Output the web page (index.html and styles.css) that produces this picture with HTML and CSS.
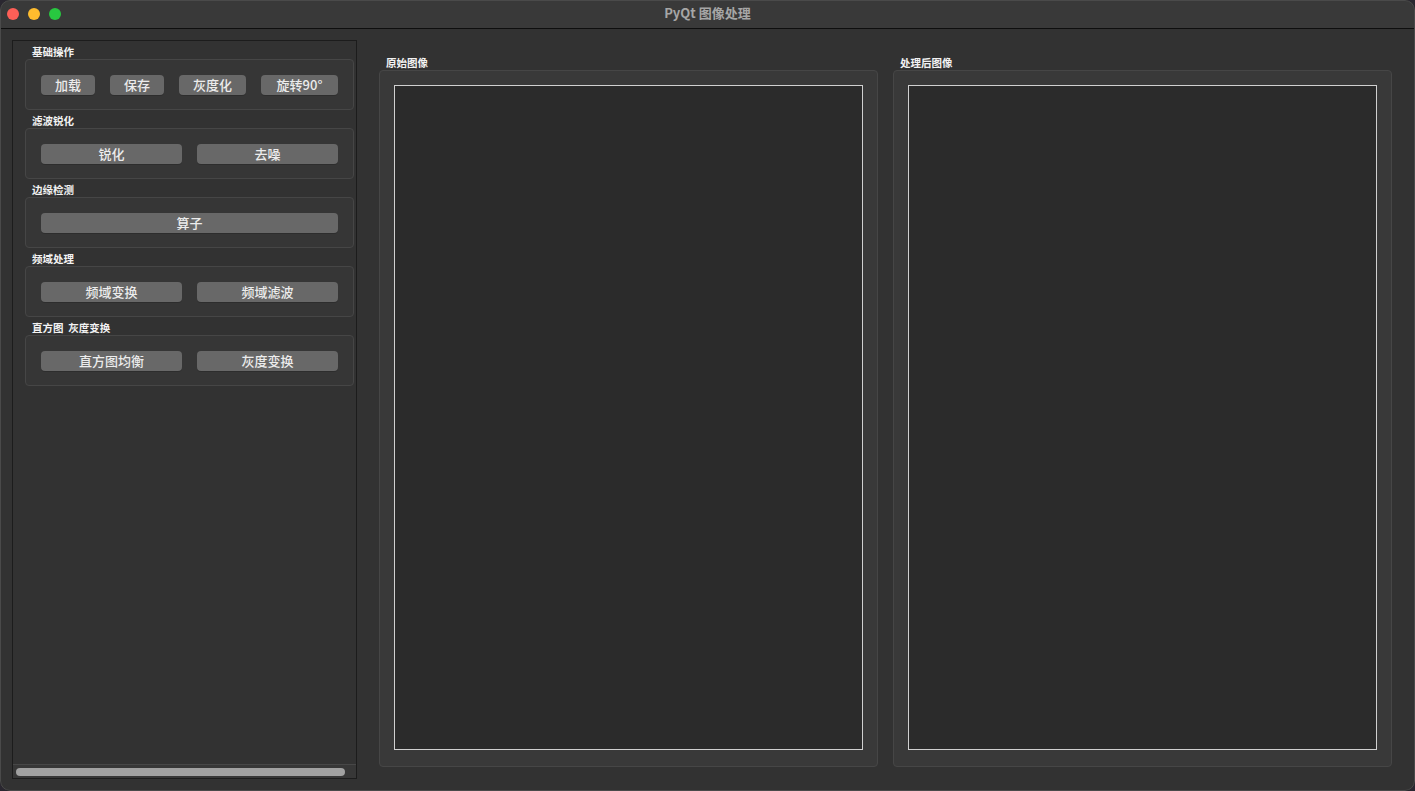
FILE: index.html
```html
<!DOCTYPE html>
<html lang="zh">
<head>
<meta charset="utf-8">
<title>PyQt 图像处理</title>
<link rel="stylesheet" href="styles.css">
</head>
<body>
<div class="window">
  <div class="titlebar">
    <div class="lights">
      <span class="light red"></span>
      <span class="light yellow"></span>
      <span class="light green"></span>
    </div>
    <div class="title">PyQt 图像处理</div>
  </div>
  <div class="main">
    <div class="sidebar">
      <div class="sidebar-content">
        <div class="group">
          <div class="group-label">基础操作</div>
          <div class="group-box row-4">
            <button class="btn">加载</button>
            <button class="btn">保存</button>
            <button class="btn">灰度化</button>
            <button class="btn">旋转90°</button>
          </div>
        </div>
        <div class="group">
          <div class="group-label">滤波锐化</div>
          <div class="group-box row-2">
            <button class="btn">锐化</button>
            <button class="btn">去噪</button>
          </div>
        </div>
        <div class="group">
          <div class="group-label">边缘检测</div>
          <div class="group-box row-1">
            <button class="btn">算子</button>
          </div>
        </div>
        <div class="group">
          <div class="group-label">频域处理</div>
          <div class="group-box row-2">
            <button class="btn">频域变换</button>
            <button class="btn">频域滤波</button>
          </div>
        </div>
        <div class="group">
          <div class="group-label">直方图&nbsp;&nbsp;灰度变换</div>
          <div class="group-box row-2">
            <button class="btn">直方图均衡</button>
            <button class="btn">灰度变换</button>
          </div>
        </div>
      </div>
      <div class="hscroll">
        <div class="hscroll-thumb"></div>
      </div>
    </div>
    <div class="views">
      <div class="view">
        <div class="view-label">原始图像</div>
        <div class="view-box">
          <div class="image-frame"></div>
        </div>
      </div>
      <div class="view">
        <div class="view-label">处理后图像</div>
        <div class="view-box">
          <div class="image-frame"></div>
        </div>
      </div>
    </div>
  </div>
</div>
</body>
</html>
```
FILE: styles.css
```css
* { box-sizing: border-box; }

html, body {
  margin: 0;
  padding: 0;
  background: #2a2730;
  width: 1415px;
  height: 791px;
  overflow: hidden;
  font-family: "Noto Sans CJK SC", "Noto Sans", sans-serif;
}

.window {
  position: relative;
  width: 1415px;
  height: 791px;
  background: #323232;
  border-radius: 10px;
  overflow: hidden;
  display: flex;
  flex-direction: column;
}

.window::after {
  content: "";
  position: absolute;
  inset: 0;
  border: 1px solid #4a4a4a;
  border-radius: 10px;
  pointer-events: none;
}

.titlebar {
  height: 29px;
  flex: none;
  background: #393939;
  border-bottom: 1px solid #0e0e0e;
  display: flex;
  align-items: center;
  justify-content: center;
  position: relative;
}

.lights {
  position: absolute;
  left: 7px;
  top: 8px;
  display: flex;
  gap: 9px;
}

.light {
  width: 12px;
  height: 12px;
  border-radius: 50%;
  display: block;
}
.red { background: #fe5f57; }
.yellow { background: #febc2e; }
.green { background: #28c840; }

.title {
  color: #a6a6a6;
  font-size: 13px;
  font-weight: 700;
  line-height: 28px;
  margin-top: -2px;
}

.main {
  flex: 1;
  display: flex;
  padding: 11px 23px 12px 12px;
  min-height: 0;
}

.sidebar {
  width: 345px;
  flex: none;
  border: 1px solid #1c1c1c;
  background: #323232;
  display: flex;
  flex-direction: column;
}

.sidebar-content {
  flex: 1;
  padding: 4px 2px 0 12px;
}

.group { margin-bottom: 4px; width: 329px; }

.group-label {
  height: 14px;
  line-height: 14px;
  font-size: 10.5px;
  font-weight: 700;
  color: #f2f2f2;
  padding-left: 7px;
}

.group-box {
  height: 51px;
  background: #363636;
  border: 1px solid #464646;
  border-radius: 4px;
  padding: 14px 15px 0 15px;
  display: grid;
  gap: 15px;
  align-content: start;
}

.row-4 { grid-template-columns: 54px 54px 67px 77px; }
.row-2 { grid-template-columns: 1fr 1fr; }
.row-1 { grid-template-columns: 1fr; }

.btn {
  height: 20px;
  margin-top: 1px;
  border: none;
  border-radius: 4px;
  background: #686868;
  color: #ececec;
  font-family: "Noto Sans CJK SC", "Noto Sans", sans-serif;
  font-size: 13px;
  font-weight: 500;
  line-height: 20px;
  padding: 0;
  box-shadow: 0 1px 0 rgba(0,0,0,0.15);
}

.hscroll {
  height: 14px;
  flex: none;
  background: #373737;
  border-top: 1px solid #474747;
  padding: 3px 11px 0 3px;
}

.hscroll-thumb {
  height: 8px;
  border-radius: 4px;
  background: #a1a1a1;
}

.views {
  flex: 1;
  display: flex;
  gap: 15px;
  margin-left: 22px;
  padding-top: 16px;
  padding-bottom: 12px;
}

.view {
  flex: 1;
  display: flex;
  flex-direction: column;
}

.view-label {
  height: 14px;
  line-height: 14px;
  font-size: 10.5px;
  font-weight: 700;
  color: #f2f2f2;
  padding-left: 7px;
}

.view-box {
  flex: 1;
  background: #393939;
  border: 1px solid #464646;
  border-radius: 4px;
  padding: 14px 14px 16px 14px;
  display: flex;
}

.image-frame {
  flex: 1;
  background: #2b2b2b;
  border: 1px solid #d0d0d0;
}
```
